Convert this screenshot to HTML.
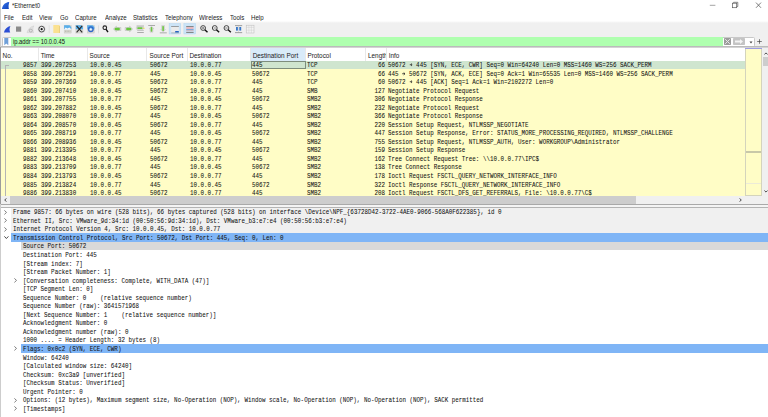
<!DOCTYPE html><html><head><meta charset="utf-8"><style>
*{margin:0;padding:0;box-sizing:border-box}
html,body{width:768px;height:417px;overflow:hidden;background:#fff;position:relative}
body{font-family:"Liberation Sans", sans-serif;color:#000}
.a{position:absolute}
.t{position:absolute;white-space:pre;line-height:10px;transform-origin:0 0}
.m{font-family:"Liberation Mono", monospace;font-size:6.3px;transform:scaleX(0.93);color:#111;-webkit-text-stroke:0.05px #111}
.r{transform-origin:100% 0}
.L{}
.s{font-family:"Liberation Sans", sans-serif}
</style></head><body>
<div class="a" style="left:0;top:0;width:1px;height:417px;background:#cdcdcd;z-index:50"></div>
<svg class="a" style="left:0;top:0" width="12" height="12" viewBox="0 0 12 12"><defs><linearGradient id="sg" x1="0" y1="0" x2="1" y2="1"><stop offset="0" stop-color="#3a78ee"/><stop offset="1" stop-color="#0a3fb8"/></linearGradient></defs><path d="M2 9.1 C2.3 5.6 4.6 2.5 8.9 1.9 Q9.4 1.9 9.2 2.4 C8.5 4.6 8.4 6.9 8.9 9.1 Z" fill="url(#sg)"/></svg>
<div class="t s" style="left:12px;top:1.3px;font-size:6.4px;transform:scaleX(0.93);color:#1a1a1a">*Ethernet0</div>
<svg class="a" style="left:700px;top:0" width="68" height="12" viewBox="0 0 68 12"><path d="M9.8 5.3H15.4" stroke="#666" stroke-width="0.6"/><rect x="32.5" y="3.2" width="4.2" height="4.5" fill="none" stroke="#5a5a5a" stroke-width="0.7"/><path d="M33.6 3.2V2.3H37.8V6.5H36.7" fill="none" stroke="#5a5a5a" stroke-width="0.7"/><path d="M56 2.6L61 7.8M61 2.6L56 7.8" stroke="#555" stroke-width="0.75"/></svg>
<div class="t s" style="left:4.4px;top:13.3px;font-size:6.5px;transform:scaleX(0.94);color:#1a1a1a">File</div>
<div class="t s" style="left:21.599999999999998px;top:13.3px;font-size:6.5px;transform:scaleX(0.94);color:#1a1a1a">Edit</div>
<div class="t s" style="left:39.300000000000004px;top:13.3px;font-size:6.5px;transform:scaleX(0.94);color:#1a1a1a">View</div>
<div class="t s" style="left:59.900000000000006px;top:13.3px;font-size:6.5px;transform:scaleX(0.94);color:#1a1a1a">Go</div>
<div class="t s" style="left:75.3px;top:13.3px;font-size:6.5px;transform:scaleX(0.94);color:#1a1a1a">Capture</div>
<div class="t s" style="left:104.5px;top:13.3px;font-size:6.5px;transform:scaleX(0.94);color:#1a1a1a">Analyze</div>
<div class="t s" style="left:133.29999999999998px;top:13.3px;font-size:6.5px;transform:scaleX(0.94);color:#1a1a1a">Statistics</div>
<div class="t s" style="left:164.6px;top:13.3px;font-size:6.5px;transform:scaleX(0.94);color:#1a1a1a">Telephony</div>
<div class="t s" style="left:199.39999999999998px;top:13.3px;font-size:6.5px;transform:scaleX(0.94);color:#1a1a1a">Wireless</div>
<div class="t s" style="left:229.6px;top:13.3px;font-size:6.5px;transform:scaleX(0.94);color:#1a1a1a">Tools</div>
<div class="t s" style="left:250.95px;top:13.3px;font-size:6.5px;transform:scaleX(0.94);color:#1a1a1a">Help</div>
<div class="a" style="left:1px;top:20.5px;width:767px;height:16px;background:linear-gradient(#fff 0px,#f0f0f0 2px,#f0f0f0 14.6px,#b8b8b8 16px)"></div>
<div class="a" style="left:1px;top:36px;width:767px;height:11px;background:#f0f0f0"></div>
<svg class="a" style="left:0;top:0" width="260" height="40" viewBox="0 0 260 40"><path d="M3.9 32.4 C4.8 29 7.3 26.4 10.4 25.9 C9.3 28.2 9.3 30.3 10.2 32.4 Z" fill="#2b4ed4"/><rect x="16" y="26.5" width="5.2" height="5.2" fill="#8b8b8b"/><path d="M27 32.6 C27.8 29.3 30 26.8 33.8 25.9 C32.6 28.3 32.7 30.4 33.6 32.6 Z" fill="#e2e2e2" stroke="#c4c4c4" stroke-width="0.4"/><circle cx="30.8" cy="30.6" r="1.5" fill="none" stroke="#9a9a9a" stroke-width="0.6"/><circle cx="41.65" cy="29.15" r="2.9" fill="none" stroke="#3a3a3a" stroke-width="1"/><circle cx="41.65" cy="29.15" r="1.1" fill="#111"/><circle cx="41.65" cy="29.15" r="3.5" fill="none" stroke="#bdbdbd" stroke-width="0.4"/><rect x="48.8" y="25.3" width="0.6" height="8" fill="#d4d4d4"/><rect x="98.3" y="25.3" width="0.6" height="8" fill="#d4d4d4"/><rect x="53.3" y="25" width="6.3" height="8" fill="#fbe190"/><rect x="59" y="26" width="0.7" height="7" fill="#e6c66e"/><rect x="64.1" y="25.2" width="7.2" height="7.9" fill="#d8d8d0" stroke="#c4c4c4" stroke-width="0.3"/><path d="M64.1 25.2 H69.5 L71.3 27 V29.2 H64.1 Z" fill="#58aeea"/><path d="M64.1 29.4 L65.6 27.6 L67.4 28.4 L69.4 27.4 L71.3 29.2 V29.8 H64.1 Z" fill="#f4f8fc"/><path d="M65 31.2 H70.4" stroke="#9a9a90" stroke-width="0.6" stroke-dasharray="1 0.6"/><rect x="75.8" y="25.2" width="7.2" height="7.9" fill="#d8d8d0" stroke="#c4c4c4" stroke-width="0.3"/><path d="M75.8 25.2 H81.2 L83.0 27 V29.2 H75.8 Z" fill="#58aeea"/><path d="M76.6 25.9 L82.2 32.4 M82.2 25.9 L76.6 32.4" stroke="#262626" stroke-width="1.1"/><rect x="87.2" y="25.2" width="7.2" height="7.9" fill="#d8d8d0" stroke="#c4c4c4" stroke-width="0.3"/><path d="M87.2 25.2 H92.60000000000001 L94.4 27 V29.2 H87.2 Z" fill="#58aeea"/><circle cx="90.8" cy="29.2" r="2.3" fill="none" stroke="#2f66c8" stroke-width="1.3"/><circle cx="90.8" cy="29.2" r="0.95" fill="#f4f8fc"/><circle cx="104.8" cy="27.7" r="1.8" fill="none" stroke="#222" stroke-width="1.1"/><path d="M105.9 29.1 L108 32.2" stroke="#111" stroke-width="1.4"/><path d="M113.4 29 L116.4 26.2 V27.5 H120.8 V30.5 H116.4 V31.8 Z" fill="#e4e4e4" stroke="#b4b4b4" stroke-width="0.55"/><rect x="114.6" y="27.8" width="5.3" height="2.4" rx="1" fill="#66c63c"/><path d="M132.6 29 L129.6 26.2 V27.5 H125.2 V30.5 H129.6 V31.8 Z" fill="#e4e4e4" stroke="#b4b4b4" stroke-width="0.55"/><rect x="126.1" y="27.8" width="5.3" height="2.4" rx="1" fill="#66c63c"/><rect x="136.6" y="25.7" width="7.4" height="0.6" fill="#8a8a8a"/><rect x="136.4" y="26.7" width="7" height="2.9" rx="1" fill="#e0e0e0" stroke="#b0b0b0" stroke-width="0.4"/><rect x="137.2" y="27.3" width="5.4" height="1.7" rx="0.8" fill="#6cc640"/><circle cx="143.9" cy="28.2" r="0.75" fill="#f0d84a"/><rect x="137.2" y="30.5" width="6.6" height="0.5" fill="#9a9a9a"/><rect x="137.2" y="32.3" width="6.6" height="0.7" fill="#8c8c8c"/><rect x="148.2" y="25" width="6.8" height="0.6" fill="#7a7a7a"/><path d="M151.5 26.2 L153.8 28.7 H152.9 V32.2 H150.1 V28.7 H149.2 Z" fill="#e2e2e2" stroke="#b4b4b4" stroke-width="0.4"/><rect x="150.7" y="27" width="1.6" height="4.8" rx="0.7" fill="#6cc640"/><rect x="159.8" y="32.6" width="7" height="0.6" fill="#7a7a7a"/><path d="M163.1 32 L165.4 29.5 H164.5 V25.5 H161.7 V29.5 H160.8 Z" fill="#e2e2e2" stroke="#b4b4b4" stroke-width="0.4"/><rect x="162.3" y="25.9" width="1.6" height="5.2" rx="0.7" fill="#6cc640"/><rect x="169.1" y="23.6" width="11.6" height="10.4" fill="#cce4f7" stroke="#a7d0f0" stroke-width="0.4"/><rect x="171.2" y="26" width="7.6" height="0.8" fill="#707070"/><rect x="171.2" y="26.8" width="7.6" height="5.6" fill="#ebebeb"/><rect x="175.2" y="31" width="3.6" height="1.6" fill="#2364c4"/><rect x="171.2" y="32.7" width="7.6" height="0.5" fill="#888"/><rect x="183.9" y="23.6" width="11.6" height="10.4" fill="#cce4f7" stroke="#a7d0f0" stroke-width="0.4"/><rect x="186.2" y="26" width="7.4" height="0.8" fill="#707070"/><rect x="186.2" y="27.3" width="7.4" height="1.4" fill="#f2a8a8"/><rect x="186.2" y="29.1" width="7.4" height="0.8" fill="#6a96d2"/><rect x="186.2" y="30.3" width="7.4" height="1" fill="#c8a8b0"/><rect x="186.2" y="32" width="7.4" height="0.8" fill="#707070"/><circle cx="203.1" cy="28" r="2.4" fill="#f4f4f4" stroke="#333" stroke-width="0.9"/><path d="M204.79999999999998 29.7 L207.5 32.3" stroke="#111" stroke-width="1.4"/><path d="M201.9 28 H204.29999999999998 M203.1 26.8 V29.2" stroke="#444" stroke-width="0.6"/><circle cx="214.75" cy="28" r="2.4" fill="#f4f4f4" stroke="#333" stroke-width="0.9"/><path d="M216.45 29.7 L219.15 32.3" stroke="#111" stroke-width="1.4"/><path d="M213.55 28 H215.95" stroke="#444" stroke-width="0.6"/><circle cx="226.45" cy="28" r="2.4" fill="#f4f4f4" stroke="#333" stroke-width="0.9"/><path d="M228.14999999999998 29.7 L230.85 32.3" stroke="#111" stroke-width="1.4"/><path d="M225.25 27.5 H227.64999999999998 M225.25 28.5 H227.64999999999998" stroke="#666" stroke-width="0.4"/><rect x="235" y="25.3" width="7.2" height="0.8" fill="#888"/><rect x="236" y="27" width="1.9" height="3.6" fill="#3a78c8"/><rect x="239.3" y="27" width="1.9" height="3.6" fill="#3a78c8"/><rect x="238.4" y="26.2" width="0.4" height="6" fill="#bbb"/><rect x="235" y="32.3" width="7.2" height="0.8" fill="#888"/><rect x="246.2" y="25.2" width="7.8" height="7.8" fill="#f4f4f4" stroke="#b8b8b8" stroke-width="0.5"/><path d="M246.2 27.4 H254 M246.2 30.2 H254 M248.9 25.2 V33 M251.4 25.2 V33" stroke="#c8c8c8" stroke-width="0.4"/></svg>
<div class="a" style="left:2px;top:36.6px;width:752.5px;height:10px;background:#fff;border:0.5px solid #c8c8c8;border-radius:1.5px"></div>
<div class="a" style="left:10.9px;top:37.1px;width:712px;height:9px;background:#afffaf"></div>
<svg class="a" style="left:3.5px;top:37.8px" width="5" height="8" viewBox="0 0 5 8"><path d="M0.3 0 H4.3 V7.3 L2.3 5.6 L0.3 7.3Z" fill="#6f9fd8"/></svg>
<div class="t s" style="left:12.7px;top:36.6px;font-size:6.3px;transform:scaleX(0.92);color:#111">ip.addr == 10.0.0.45</div>
<div class="a" style="left:724px;top:38px;width:7px;height:6.8px;background:#9c9c9c;border-radius:0.8px"></div>
<svg class="a" style="left:724px;top:37.8px" width="7" height="7" viewBox="0 0 7 7"><path d="M1.2 1.2L5.8 5.8M5.8 1.2L1.2 5.8" stroke="#e8e8e8" stroke-width="1"/></svg>
<div class="a" style="left:733px;top:38px;width:11.7px;height:6.8px;background:#c4c4c4;border-radius:0.8px"></div>
<svg class="a" style="left:734px;top:38px" width="10" height="7" viewBox="0 0 10 7"><path d="M1 2.5H6V1L9 3.5L6 6V4.5H1Z" fill="#f4f4f4"/></svg>
<svg class="a" style="left:748.5px;top:40.5px" width="4" height="3" viewBox="0 0 4 3"><path d="M0.5 0.5H3.5L2 2.5Z" fill="#444"/></svg>
<svg class="a" style="left:757px;top:39.3px" width="5" height="5" viewBox="0 0 5 5"><path d="M2.5 0.2V4.8M0.2 2.5H4.8" stroke="#3a3a3a" stroke-width="0.65"/></svg>
<div class="a" style="left:1px;top:47.5px;width:744px;height:148px;background:#fffdc6;overflow:hidden">
<div class="a" style="left:0;top:0;width:744px;height:13px;background:#fff"></div>
<div class="a" style="left:249.4px;top:0.5px;width:55.3px;height:12.5px;background:#d9ebf9"></div>
<div class="a" style="left:37px;top:0;width:1px;height:13px;background:#e8e8e8"></div>
<div class="a" style="left:86px;top:0;width:1px;height:13px;background:#e8e8e8"></div>
<div class="a" style="left:145px;top:0;width:1px;height:13px;background:#e8e8e8"></div>
<div class="a" style="left:186px;top:0;width:1px;height:13px;background:#e8e8e8"></div>
<div class="a" style="left:249px;top:0;width:1px;height:13px;background:#e8e8e8"></div>
<div class="a" style="left:304px;top:0;width:1px;height:13px;background:#e8e8e8"></div>
<div class="a" style="left:364px;top:0;width:1px;height:13px;background:#e8e8e8"></div>
<div class="a" style="left:385px;top:0;width:1px;height:13px;background:#e8e8e8"></div>
<div class="t s" style="left:1.5999999999999999px;top:3px;font-size:6.4px;color:#1a1a1a">No.</div>
<div class="t s" style="left:39.7px;top:3px;font-size:6.4px;color:#1a1a1a">Time</div>
<div class="t s" style="left:88.5px;top:3px;font-size:6.4px;color:#1a1a1a">Source</div>
<div class="t s" style="left:148.5px;top:3px;font-size:6.4px;color:#1a1a1a">Source Port</div>
<div class="t s" style="left:188.39999999999998px;top:3px;font-size:6.4px;color:#1a1a1a">Destination</div>
<div class="t s" style="left:251.7px;top:3px;font-size:6.4px;color:#1a1a1a">Destination Port</div>
<div class="t s" style="left:306.4px;top:3px;font-size:6.4px;color:#1a1a1a">Protocol</div>
<div class="t s" style="left:387.7px;top:3px;font-size:6.4px;color:#1a1a1a">Info</div>
<div class="a" style="left:365.5px;top:0;width:19px;height:13px;overflow:hidden"><div class="t s" style="left:1.5px;top:3px;font-size:6.4px;color:#1a1a1a">Length</div></div>
<div class="a" style="left:0;top:13.10px;width:744px;height:8.53px;background:#cfe5cf"></div>
<div class="a" style="left:250px;top:13.10px;width:54.5px;height:8.23px;border:0.6px solid #7d8d7d"></div>
<div class="a L" style="left:0;top:13.500px;width:744px;height:10px">
<div class="t m r" style="left:-3.8999999999999986px;width:40px;text-align:right;top:0">9857</div>
<div class="t m" style="left:39.70px;top:0">399.207253</div>
<div class="t m" style="left:88.60px;top:0">10.0.0.45</div>
<div class="t m" style="left:148.80px;top:0">50672</div>
<div class="t m" style="left:188.60px;top:0">10.0.0.77</div>
<div class="t m" style="left:250.80px;top:0">445</div>
<div class="t m" style="left:306.30px;top:0">TCP</div>
<div class="t m" style="left:386.90px;top:0">50672 <span style="display:inline-block;width:1ch;height:6.3px;position:relative"><svg style="position:absolute;left:0;top:0" width="3.78" height="6.3" viewBox="0 0 3.78 6.3"><path d="M0.3 3.75 H3.1 M1.9 2.6 L3.3 3.75 L1.9 4.9" stroke="#222" stroke-width="0.85" fill="none"/></svg></span> 445 [SYN, ECE, CWR] Seq=0 Win=64240 Len=0 MSS=1460 WS=256 SACK_PERM</div>
<div class="t m r" style="left:353.8px;width:30px;text-align:right;top:0">66</div>
</div>
<div class="a L" style="left:0;top:22.500px;width:744px;height:10px">
<div class="t m r" style="left:-3.8999999999999986px;width:40px;text-align:right;top:0">9858</div>
<div class="t m" style="left:39.70px;top:0">399.207291</div>
<div class="t m" style="left:88.60px;top:0">10.0.0.77</div>
<div class="t m" style="left:148.80px;top:0">445</div>
<div class="t m" style="left:188.60px;top:0">10.0.0.45</div>
<div class="t m" style="left:250.80px;top:0">50672</div>
<div class="t m" style="left:306.30px;top:0">TCP</div>
<div class="t m" style="left:386.90px;top:0">445 <span style="display:inline-block;width:1ch;height:6.3px;position:relative"><svg style="position:absolute;left:0;top:0" width="3.78" height="6.3" viewBox="0 0 3.78 6.3"><path d="M0.3 3.75 H3.1 M1.9 2.6 L3.3 3.75 L1.9 4.9" stroke="#222" stroke-width="0.85" fill="none"/></svg></span> 50672 [SYN, ACK, ECE] Seq=0 Ack=1 Win=65535 Len=0 MSS=1460 WS=256 SACK_PERM</div>
<div class="t m r" style="left:353.8px;width:30px;text-align:right;top:0">66</div>
</div>
<div class="a L" style="left:0;top:30.500px;width:744px;height:10px">
<div class="t m r" style="left:-3.8999999999999986px;width:40px;text-align:right;top:0">9859</div>
<div class="t m" style="left:39.70px;top:0">399.207369</div>
<div class="t m" style="left:88.60px;top:0">10.0.0.45</div>
<div class="t m" style="left:148.80px;top:0">50672</div>
<div class="t m" style="left:188.60px;top:0">10.0.0.77</div>
<div class="t m" style="left:250.80px;top:0">445</div>
<div class="t m" style="left:306.30px;top:0">TCP</div>
<div class="t m" style="left:386.90px;top:0">50672 <span style="display:inline-block;width:1ch;height:6.3px;position:relative"><svg style="position:absolute;left:0;top:0" width="3.78" height="6.3" viewBox="0 0 3.78 6.3"><path d="M0.3 3.75 H3.1 M1.9 2.6 L3.3 3.75 L1.9 4.9" stroke="#222" stroke-width="0.85" fill="none"/></svg></span> 445 [ACK] Seq=1 Ack=1 Win=2102272 Len=0</div>
<div class="t m r" style="left:353.8px;width:30px;text-align:right;top:0">60</div>
</div>
<div class="a L" style="left:0;top:39.500px;width:744px;height:10px">
<div class="t m r" style="left:-3.8999999999999986px;width:40px;text-align:right;top:0">9860</div>
<div class="t m" style="left:39.70px;top:0">399.207410</div>
<div class="t m" style="left:88.60px;top:0">10.0.0.45</div>
<div class="t m" style="left:148.80px;top:0">50672</div>
<div class="t m" style="left:188.60px;top:0">10.0.0.77</div>
<div class="t m" style="left:250.80px;top:0">445</div>
<div class="t m" style="left:306.30px;top:0">SMB</div>
<div class="t m" style="left:386.90px;top:0">Negotiate Protocol Request</div>
<div class="t m r" style="left:353.8px;width:30px;text-align:right;top:0">127</div>
</div>
<div class="a L" style="left:0;top:47.500px;width:744px;height:10px">
<div class="t m r" style="left:-3.8999999999999986px;width:40px;text-align:right;top:0">9861</div>
<div class="t m" style="left:39.70px;top:0">399.207755</div>
<div class="t m" style="left:88.60px;top:0">10.0.0.77</div>
<div class="t m" style="left:148.80px;top:0">445</div>
<div class="t m" style="left:188.60px;top:0">10.0.0.45</div>
<div class="t m" style="left:250.80px;top:0">50672</div>
<div class="t m" style="left:306.30px;top:0">SMB2</div>
<div class="t m" style="left:386.90px;top:0">Negotiate Protocol Response</div>
<div class="t m r" style="left:353.8px;width:30px;text-align:right;top:0">306</div>
</div>
<div class="a L" style="left:0;top:56.500px;width:744px;height:10px">
<div class="t m r" style="left:-3.8999999999999986px;width:40px;text-align:right;top:0">9862</div>
<div class="t m" style="left:39.70px;top:0">399.207882</div>
<div class="t m" style="left:88.60px;top:0">10.0.0.45</div>
<div class="t m" style="left:148.80px;top:0">50672</div>
<div class="t m" style="left:188.60px;top:0">10.0.0.77</div>
<div class="t m" style="left:250.80px;top:0">445</div>
<div class="t m" style="left:306.30px;top:0">SMB2</div>
<div class="t m" style="left:386.90px;top:0">Negotiate Protocol Request</div>
<div class="t m r" style="left:353.8px;width:30px;text-align:right;top:0">232</div>
</div>
<div class="a L" style="left:0;top:64.500px;width:744px;height:10px">
<div class="t m r" style="left:-3.8999999999999986px;width:40px;text-align:right;top:0">9863</div>
<div class="t m" style="left:39.70px;top:0">399.208070</div>
<div class="t m" style="left:88.60px;top:0">10.0.0.77</div>
<div class="t m" style="left:148.80px;top:0">445</div>
<div class="t m" style="left:188.60px;top:0">10.0.0.45</div>
<div class="t m" style="left:250.80px;top:0">50672</div>
<div class="t m" style="left:306.30px;top:0">SMB2</div>
<div class="t m" style="left:386.90px;top:0">Negotiate Protocol Response</div>
<div class="t m r" style="left:353.8px;width:30px;text-align:right;top:0">366</div>
</div>
<div class="a L" style="left:0;top:73.500px;width:744px;height:10px">
<div class="t m r" style="left:-3.8999999999999986px;width:40px;text-align:right;top:0">9864</div>
<div class="t m" style="left:39.70px;top:0">399.208570</div>
<div class="t m" style="left:88.60px;top:0">10.0.0.45</div>
<div class="t m" style="left:148.80px;top:0">50672</div>
<div class="t m" style="left:188.60px;top:0">10.0.0.77</div>
<div class="t m" style="left:250.80px;top:0">445</div>
<div class="t m" style="left:306.30px;top:0">SMB2</div>
<div class="t m" style="left:386.90px;top:0">Session Setup Request, NTLMSSP_NEGOTIATE</div>
<div class="t m r" style="left:353.8px;width:30px;text-align:right;top:0">220</div>
</div>
<div class="a L" style="left:0;top:81.500px;width:744px;height:10px">
<div class="t m r" style="left:-3.8999999999999986px;width:40px;text-align:right;top:0">9865</div>
<div class="t m" style="left:39.70px;top:0">399.208719</div>
<div class="t m" style="left:88.60px;top:0">10.0.0.77</div>
<div class="t m" style="left:148.80px;top:0">445</div>
<div class="t m" style="left:188.60px;top:0">10.0.0.45</div>
<div class="t m" style="left:250.80px;top:0">50672</div>
<div class="t m" style="left:306.30px;top:0">SMB2</div>
<div class="t m" style="left:386.90px;top:0">Session Setup Response, Error: STATUS_MORE_PROCESSING_REQUIRED, NTLMSSP_CHALLENGE</div>
<div class="t m r" style="left:353.8px;width:30px;text-align:right;top:0">447</div>
</div>
<div class="a L" style="left:0;top:90.500px;width:744px;height:10px">
<div class="t m r" style="left:-3.8999999999999986px;width:40px;text-align:right;top:0">9866</div>
<div class="t m" style="left:39.70px;top:0">399.208936</div>
<div class="t m" style="left:88.60px;top:0">10.0.0.45</div>
<div class="t m" style="left:148.80px;top:0">50672</div>
<div class="t m" style="left:188.60px;top:0">10.0.0.77</div>
<div class="t m" style="left:250.80px;top:0">445</div>
<div class="t m" style="left:306.30px;top:0">SMB2</div>
<div class="t m" style="left:386.90px;top:0">Session Setup Request, NTLMSSP_AUTH, User: WORKGROUP\Administrator</div>
<div class="t m r" style="left:353.8px;width:30px;text-align:right;top:0">755</div>
</div>
<div class="a L" style="left:0;top:98.500px;width:744px;height:10px">
<div class="t m r" style="left:-3.8999999999999986px;width:40px;text-align:right;top:0">9881</div>
<div class="t m" style="left:39.70px;top:0">399.213395</div>
<div class="t m" style="left:88.60px;top:0">10.0.0.77</div>
<div class="t m" style="left:148.80px;top:0">445</div>
<div class="t m" style="left:188.60px;top:0">10.0.0.45</div>
<div class="t m" style="left:250.80px;top:0">50672</div>
<div class="t m" style="left:306.30px;top:0">SMB2</div>
<div class="t m" style="left:386.90px;top:0">Session Setup Response</div>
<div class="t m r" style="left:353.8px;width:30px;text-align:right;top:0">159</div>
</div>
<div class="a L" style="left:0;top:107.500px;width:744px;height:10px">
<div class="t m r" style="left:-3.8999999999999986px;width:40px;text-align:right;top:0">9882</div>
<div class="t m" style="left:39.70px;top:0">399.213648</div>
<div class="t m" style="left:88.60px;top:0">10.0.0.45</div>
<div class="t m" style="left:148.80px;top:0">50672</div>
<div class="t m" style="left:188.60px;top:0">10.0.0.77</div>
<div class="t m" style="left:250.80px;top:0">445</div>
<div class="t m" style="left:306.30px;top:0">SMB2</div>
<div class="t m" style="left:386.90px;top:0">Tree Connect Request Tree: \\10.0.0.77\IPC$</div>
<div class="t m r" style="left:353.8px;width:30px;text-align:right;top:0">162</div>
</div>
<div class="a L" style="left:0;top:115.500px;width:744px;height:10px">
<div class="t m r" style="left:-3.8999999999999986px;width:40px;text-align:right;top:0">9883</div>
<div class="t m" style="left:39.70px;top:0">399.213709</div>
<div class="t m" style="left:88.60px;top:0">10.0.0.77</div>
<div class="t m" style="left:148.80px;top:0">445</div>
<div class="t m" style="left:188.60px;top:0">10.0.0.45</div>
<div class="t m" style="left:250.80px;top:0">50672</div>
<div class="t m" style="left:306.30px;top:0">SMB2</div>
<div class="t m" style="left:386.90px;top:0">Tree Connect Response</div>
<div class="t m r" style="left:353.8px;width:30px;text-align:right;top:0">138</div>
</div>
<div class="a L" style="left:0;top:124.500px;width:744px;height:10px">
<div class="t m r" style="left:-3.8999999999999986px;width:40px;text-align:right;top:0">9884</div>
<div class="t m" style="left:39.70px;top:0">399.213793</div>
<div class="t m" style="left:88.60px;top:0">10.0.0.45</div>
<div class="t m" style="left:148.80px;top:0">50672</div>
<div class="t m" style="left:188.60px;top:0">10.0.0.77</div>
<div class="t m" style="left:250.80px;top:0">445</div>
<div class="t m" style="left:306.30px;top:0">SMB2</div>
<div class="t m" style="left:386.90px;top:0">Ioctl Request FSCTL_QUERY_NETWORK_INTERFACE_INFO</div>
<div class="t m r" style="left:353.8px;width:30px;text-align:right;top:0">178</div>
</div>
<div class="a L" style="left:0;top:133.500px;width:744px;height:10px">
<div class="t m r" style="left:-3.8999999999999986px;width:40px;text-align:right;top:0">9885</div>
<div class="t m" style="left:39.70px;top:0">399.213824</div>
<div class="t m" style="left:88.60px;top:0">10.0.0.77</div>
<div class="t m" style="left:148.80px;top:0">445</div>
<div class="t m" style="left:188.60px;top:0">10.0.0.45</div>
<div class="t m" style="left:250.80px;top:0">50672</div>
<div class="t m" style="left:306.30px;top:0">SMB2</div>
<div class="t m" style="left:386.90px;top:0">Ioctl Response FSCTL_QUERY_NETWORK_INTERFACE_INFO</div>
<div class="t m r" style="left:353.8px;width:30px;text-align:right;top:0">322</div>
</div>
<div class="a L" style="left:0;top:141.500px;width:744px;height:10px">
<div class="t m r" style="left:-3.8999999999999986px;width:40px;text-align:right;top:0">9886</div>
<div class="t m" style="left:39.70px;top:0">399.213830</div>
<div class="t m" style="left:88.60px;top:0">10.0.0.45</div>
<div class="t m" style="left:148.80px;top:0">50672</div>
<div class="t m" style="left:188.60px;top:0">10.0.0.77</div>
<div class="t m" style="left:250.80px;top:0">445</div>
<div class="t m" style="left:306.30px;top:0">SMB2</div>
<div class="t m" style="left:386.90px;top:0">Ioctl Request FSCTL_DFS_GET_REFERRALS, File: \10.0.0.77\C$</div>
<div class="t m r" style="left:353.8px;width:30px;text-align:right;top:0">208</div>
</div>
<div class="a" style="left:4.1px;top:17.10px;width:0.8px;height:140px;background:#b4b4b4"></div>
<div class="a" style="left:4.1px;top:17.10px;width:3.9px;height:0.9px;background:#b4b4b4"></div>
</div>
<div class="a" style="left:1px;top:46.1px;width:767px;height:1.9px;background:linear-gradient(#b4b4b4 0px,#c4c4c4 1.2px,#e8e8e8 1.9px);z-index:5"></div>
<div class="a" style="left:0;top:47px;width:1px;height:157px;background:#9c9c9c;z-index:51"></div>
<div class="a" style="left:745px;top:47.8px;width:17px;height:148px;background:#fffdc6;border-left:0.8px solid #d4d4bc;border-right:0.8px solid #d4d4bc;border-bottom:0.8px solid #d4d4bc"></div>
<div class="a" style="left:745px;top:47.8px;width:17px;height:1.2px;background:#9c9ce4"></div>
<div class="a" style="left:745.8px;top:151.4px;width:15.4px;height:1.3px;background:#c8c8a8"></div>
<div class="a" style="left:745.8px;top:183px;width:15.4px;height:0.6px;background:#ecebd8"></div>
<div class="a" style="left:762px;top:47.5px;width:6px;height:148px;background:#f0f0f0"></div>
<div class="a" style="left:763px;top:57px;width:5px;height:8.6px;background:#cdcdcd"></div>
<svg class="a" style="left:763.5px;top:51.5px" width="4" height="3" viewBox="0 0 4 3"><path d="M0.4 2.5L2 0.9L3.6 2.5" stroke="#444" stroke-width="0.95" fill="none"/></svg>
<svg class="a" style="left:764px;top:190.3px" width="4" height="3" viewBox="0 0 4 3"><path d="M0.4 0.5L2 2.1L3.6 0.5" stroke="#444" stroke-width="0.95" fill="none"/></svg>
<div class="a" style="left:1px;top:195.5px;width:767px;height:8.2px;background:#f0f0f0"></div>
<div class="a" style="left:9.8px;top:195.7px;width:626px;height:7.9px;background:#cdcdcd"></div>
<svg class="a" style="left:3.5px;top:197.5px" width="3" height="4" viewBox="0 0 3 4"><path d="M2.5 0.4L0.7 2L2.5 3.6" stroke="#444" stroke-width="0.95" fill="none"/></svg>
<svg class="a" style="left:739.3px;top:197.8px" width="3" height="4" viewBox="0 0 3 4"><path d="M0.5 0.4L2.3 2L0.5 3.6" stroke="#444" stroke-width="0.95" fill="none"/></svg>
<div class="a" style="left:1px;top:203.7px;width:767px;height:4px;background:#f4f4f4"></div>
<div class="a" style="left:1px;top:203.9px;width:767px;height:1.1px;background:#a9a9a9"></div>
<div class="a" style="left:1px;top:206.8px;width:767px;height:1px;background:#b4b4b4"></div>
<div class="a" style="left:1px;top:207.8px;width:767px;height:210px;background:#fff;overflow:hidden">
<div class="a" style="left:9.9px;top:-0.30px;width:757.1px;height:8.54px;background:#f0f0f0"></div>
<div class="a L" style="left:0;top:0.200px;width:767px;height:10px"><div class="t m" style="left:11.56px;top:0">Frame 9857: 66 bytes on wire (528 bits), 66 bytes captured (528 bits) on interface \Device\NPF_{63728D42-3722-4AE0-9066-568A0F622385}, id 0</div></div>
<svg class="a" style="left:3.20px;top:2.00px" width="3" height="5" viewBox="0 0 3 5"><path d="M0.4 0.4L2.5 2.4L0.4 4.4" stroke="#666" stroke-width="0.85" fill="none"/></svg>
<div class="a" style="left:9.9px;top:8.24px;width:757.1px;height:8.54px;background:#f0f0f0"></div>
<div class="a L" style="left:0;top:9.200px;width:767px;height:10px"><div class="t m" style="left:11.56px;top:0">Ethernet II, Src: VMware_9d:34:1d (00:50:56:9d:34:1d), Dst: VMware_b3:e7:e4 (00:50:56:b3:e7:e4)</div></div>
<svg class="a" style="left:3.20px;top:10.54px" width="3" height="5" viewBox="0 0 3 5"><path d="M0.4 0.4L2.5 2.4L0.4 4.4" stroke="#666" stroke-width="0.85" fill="none"/></svg>
<div class="a" style="left:9.9px;top:16.78px;width:757.1px;height:8.54px;background:#f0f0f0"></div>
<div class="a L" style="left:0;top:17.200px;width:767px;height:10px"><div class="t m" style="left:11.56px;top:0">Internet Protocol Version 4, Src: 10.0.0.45, Dst: 10.0.0.77</div></div>
<svg class="a" style="left:3.20px;top:19.08px" width="3" height="5" viewBox="0 0 3 5"><path d="M0.4 0.4L2.5 2.4L0.4 4.4" stroke="#666" stroke-width="0.85" fill="none"/></svg>
<div class="a" style="left:9.9px;top:25.32px;width:757.1px;height:8.54px;background:#7fb5f6"></div>
<div class="a L" style="left:0;top:26.200px;width:767px;height:10px"><div class="t m" style="left:11.56px;top:0">Transmission Control Protocol, Src Port: 50672, Dst Port: 445, Seq: 0, Len: 0</div></div>
<svg class="a" style="left:3.20px;top:27.82px" width="5" height="3" viewBox="0 0 5 3"><path d="M0.4 0.4L2.4 2.5L4.4 0.4" stroke="#333" stroke-width="0.9" fill="none"/></svg>
<div class="a" style="left:20.1px;top:33.86px;width:746.9px;height:8.54px;background:#d9d9d9"></div>
<div class="a L" style="left:0;top:34.200px;width:767px;height:10px"><div class="t m" style="left:21.70px;top:0">Source Port: 50672</div></div>
<div class="a L" style="left:0;top:43.200px;width:767px;height:10px"><div class="t m" style="left:21.70px;top:0">Destination Port: 445</div></div>
<div class="a L" style="left:0;top:52.200px;width:767px;height:10px"><div class="t m" style="left:21.70px;top:0">[Stream index: 7]</div></div>
<div class="a L" style="left:0;top:60.200px;width:767px;height:10px"><div class="t m" style="left:21.70px;top:0">[Stream Packet Number: 1]</div></div>
<div class="a L" style="left:0;top:69.200px;width:767px;height:10px"><div class="t m" style="left:21.70px;top:0">[Conversation completeness: Complete, WITH_DATA (47)]</div></div>
<svg class="a" style="left:13.00px;top:70.32px" width="3" height="5" viewBox="0 0 3 5"><path d="M0.4 0.4L2.5 2.4L0.4 4.4" stroke="#666" stroke-width="0.85" fill="none"/></svg>
<div class="a L" style="left:0;top:77.200px;width:767px;height:10px"><div class="t m" style="left:21.70px;top:0">[TCP Segment Len: 0]</div></div>
<div class="a L" style="left:0;top:86.200px;width:767px;height:10px"><div class="t m" style="left:21.70px;top:0">Sequence Number: 0    (relative sequence number)</div></div>
<div class="a L" style="left:0;top:94.200px;width:767px;height:10px"><div class="t m" style="left:21.70px;top:0">Sequence Number (raw): 3641571968</div></div>
<div class="a L" style="left:0;top:103.200px;width:767px;height:10px"><div class="t m" style="left:21.70px;top:0">[Next Sequence Number: 1    (relative sequence number)]</div></div>
<div class="a L" style="left:0;top:111.200px;width:767px;height:10px"><div class="t m" style="left:21.70px;top:0">Acknowledgment Number: 0</div></div>
<div class="a L" style="left:0;top:120.200px;width:767px;height:10px"><div class="t m" style="left:21.70px;top:0">Acknowledgment number (raw): 0</div></div>
<div class="a L" style="left:0;top:128.200px;width:767px;height:10px"><div class="t m" style="left:21.70px;top:0">1000 .... = Header Length: 32 bytes (8)</div></div>
<div class="a" style="left:20.1px;top:136.34px;width:746.9px;height:8.54px;background:#7fb5f6"></div>
<div class="a L" style="left:0;top:137.200px;width:767px;height:10px"><div class="t m" style="left:21.70px;top:0">Flags: 0x0c2 (SYN, ECE, CWR)</div></div>
<svg class="a" style="left:13.00px;top:138.64px" width="3" height="5" viewBox="0 0 3 5"><path d="M0.4 0.4L2.5 2.4L0.4 4.4" stroke="#666" stroke-width="0.85" fill="none"/></svg>
<div class="a L" style="left:0;top:146.200px;width:767px;height:10px"><div class="t m" style="left:21.70px;top:0">Window: 64240</div></div>
<div class="a L" style="left:0;top:154.200px;width:767px;height:10px"><div class="t m" style="left:21.70px;top:0">[Calculated window size: 64240]</div></div>
<div class="a L" style="left:0;top:163.200px;width:767px;height:10px"><div class="t m" style="left:21.70px;top:0">Checksum: 0xc3a9 [unverified]</div></div>
<div class="a L" style="left:0;top:171.200px;width:767px;height:10px"><div class="t m" style="left:21.70px;top:0">[Checksum Status: Unverified]</div></div>
<div class="a L" style="left:0;top:180.200px;width:767px;height:10px"><div class="t m" style="left:21.70px;top:0">Urgent Pointer: 0</div></div>
<div class="a L" style="left:0;top:188.200px;width:767px;height:10px"><div class="t m" style="left:21.70px;top:0">Options: (12 bytes), Maximum segment size, No-Operation (NOP), Window scale, No-Operation (NOP), No-Operation (NOP), SACK permitted</div></div>
<svg class="a" style="left:13.00px;top:189.88px" width="3" height="5" viewBox="0 0 3 5"><path d="M0.4 0.4L2.5 2.4L0.4 4.4" stroke="#666" stroke-width="0.85" fill="none"/></svg>
<div class="a L" style="left:0;top:197.200px;width:767px;height:10px"><div class="t m" style="left:21.70px;top:0">[Timestamps]</div></div>
<svg class="a" style="left:13.00px;top:198.42px" width="3" height="5" viewBox="0 0 3 5"><path d="M0.4 0.4L2.5 2.4L0.4 4.4" stroke="#666" stroke-width="0.85" fill="none"/></svg>
</div>
</body></html>
